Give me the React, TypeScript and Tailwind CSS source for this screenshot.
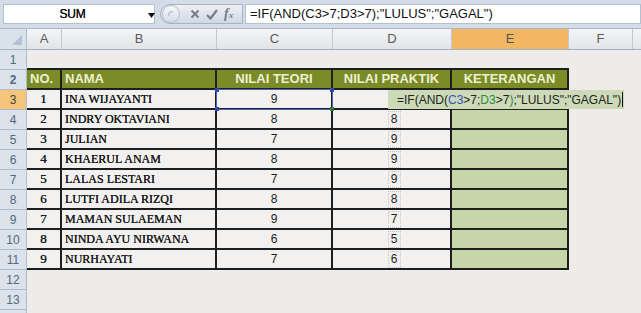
import React from "react";

const data: [string, string, string, string][] = [
  ["1", "INA WIJAYANTI", "9", ""],
  ["2", "INDRY OKTAVIANI", "8", "8"],
  ["3", "JULIAN", "7", "9"],
  ["4", "KHAERUL ANAM", "8", "9"],
  ["5", "LALAS LESTARI", "7", "9"],
  ["6", "LUTFI ADILA RIZQI", "8", "8"],
  ["7", "MAMAN SULAEMAN", "9", "7"],
  ["8", "NINDA AYU NIRWANA", "6", "5"],
  ["9", "NURHAYATI", "7", "6"],
];

function RowHeader({ n, active }: { n?: number; active?: boolean }) {
  return (
    <div
      className={`w-[27px] shrink-0 h-full flex items-center justify-center border-r border-b border-[#aebdce] text-[12px] ${
        active ? "bg-[#f5c57c] text-[#3f3f3f]" : "bg-[#dbe2eb] text-[#56667c]"
      }`}
    >
      {n}
    </div>
  );
}

const tb = "border-r-2 border-b-2 border-[#1e1e1e]";

export default function App() {
  return (
    <div className="w-[641px] h-[313px] overflow-hidden bg-[#edeceb] font-['Liberation_Sans',sans-serif] select-none">
      {/* Formula bar */}
      <div className="h-[29px] bg-[#d3dce7] border-b border-[#a9b8c9] pt-[4px] pb-[4px] flex">
        <div className="ml-[3px] w-[152px] h-[20px] bg-white border border-[#b3c0cf] flex items-center relative">
          <div className="w-[137px] text-center text-[12px] text-[#111] tracking-tight [text-shadow:0_0_0.4px_#000]">SUM</div>
          <svg width="9" height="8" viewBox="0 0 9 8" className="absolute left-[143px] top-[6px]">
            <path d="M1 2 L8 2 L4.5 7 Z" fill="#111" />
          </svg>
        </div>
        <div className="ml-[5px] w-[83px] h-[20px] rounded-l-full bg-gradient-to-b from-[#eef1f5] to-[#cfd8e3] border border-[#a6b3c3] flex items-center relative">
          <div className="ml-[1px] w-[18px] h-[18px] rounded-full bg-gradient-to-b from-[#f7f9fb] to-[#d3dce6] border border-[#b5c1cf] flex items-center justify-center">
            <svg width="8" height="8" viewBox="0 0 8 8">
              <path d="M2 6 A3 3 0 0 1 6 2" stroke="#b8c2ce" strokeWidth="1.5" fill="none" />
            </svg>
          </div>
          <svg width="10" height="10" viewBox="0 0 10 10" className="ml-[10px]">
            <path d="M1.5 1.5 L8.5 8.5 M8.5 1.5 L1.5 8.5" stroke="#767d88" strokeWidth="2" />
          </svg>
          <svg width="12" height="11" viewBox="0 0 12 11" className="ml-[6px]">
            <path d="M1 6 L4.5 9.5 L11 1" stroke="#767d88" strokeWidth="2.2" fill="none" />
          </svg>
          <span className="ml-[6px] italic font-['Liberation_Serif',serif] text-[14px] text-[#767d88] font-bold leading-none">
            f<span className="text-[9px]">x</span>
          </span>
        </div>
        <div className="ml-[2px] flex-1 h-[20px] bg-white border border-[#b3c0cf] flex items-center pl-[4px] text-[13px] text-[#111] whitespace-nowrap">
          =IF(AND(C3&gt;7;D3&gt;7);"LULUS";"GAGAL")
        </div>
      </div>

      {/* Column headers */}
      <div className="h-[21px] flex bg-gradient-to-b from-[#f4f5f6] to-[#e2e4e7] border-b border-[#a4b3c4] text-[13px] text-[#5a5a5a]">
        <div className="w-[27px] shrink-0 h-full bg-[#d9e1ea] border-r border-[#aebdce] relative">
          <svg width="12" height="12" viewBox="0 0 12 12" className="absolute right-[3px] bottom-[3px]">
            <path d="M11 1 L11 11 L1 11 Z" fill="#b3c1d2" />
          </svg>
        </div>
        <div className="w-[35px] shrink-0 h-full flex items-center justify-center border-r border-[#c3c8cf]">A</div>
        <div className="w-[155px] shrink-0 h-full flex items-center justify-center border-r border-[#c3c8cf]">B</div>
        <div className="w-[116px] shrink-0 h-full flex items-center justify-center border-r border-[#c3c8cf]">C</div>
        <div className="w-[119px] shrink-0 h-full flex items-center justify-center border-r border-[#c3c8cf]">D</div>
        <div className="w-[117px] shrink-0 h-full flex items-center justify-center border-r border-[#c3c8cf] bg-[#f2b763] text-[#555]">E</div>
        <div className="w-[64px] shrink-0 h-full flex items-center justify-center border-r border-[#c3c8cf]">F</div>
        <div className="flex-1 h-full" />
      </div>

      {/* Row 1 */}
      <div className="h-[20px] flex">
        <RowHeader n={1} />
        <div className="w-[542px] shrink-0 border-b-2 border-[#1e1e1e]" />
        <div className="flex-1" />
      </div>

      {/* Row 2 header */}
      <div className="h-[20px] flex text-[13px] font-bold text-[#eef0d2]">
        <RowHeader n={2} />
        <div className={`w-[35px] shrink-0 bg-[#7b8b27] ${tb} flex items-center pl-[3px]`}>NO.</div>
        <div className={`w-[155px] shrink-0 bg-[#7b8b27] ${tb} flex items-center pl-[3px]`}>NAMA</div>
        <div className={`w-[116px] shrink-0 bg-[#7b8b27] ${tb} flex items-center justify-center`}>NILAI TEORI</div>
        <div className={`w-[119px] shrink-0 bg-[#7b8b27] ${tb} flex items-center justify-center`}>NILAI PRAKTIK</div>
        <div className={`w-[117px] shrink-0 bg-[#7b8b27] ${tb} flex items-center justify-center`}>KETERANGAN</div>
        <div className="flex-1" />
      </div>

      {/* Data rows */}
      {data.map((r, i) => {
        const rowNo = i + 3;
        const first = i === 0;
        return (
          <div key={rowNo} className="h-[20px] flex relative text-[12px] text-[#1e1e1e]">
            <RowHeader n={rowNo} active={first} />
            <div className={`w-[35px] shrink-0 bg-[#f2f1f0] ${tb} flex items-center justify-center font-['Liberation_Serif',serif] text-[13px] [text-shadow:0_0_0.5px_#000]`}>
              {r[0]}
            </div>
            <div className={`w-[155px] shrink-0 bg-[#f2f1f0] ${tb} flex items-center pl-[3px] font-['Liberation_Serif',serif] text-[12px] whitespace-nowrap [text-shadow:0_0_0.5px_#000]`}>
              {r[1]}
            </div>
            <div className={`w-[116px] shrink-0 bg-[#f2f1f0] ${tb} flex items-center justify-center relative`}>
              {r[2]}
              {first && (
                <div className="absolute -top-[1px] -left-[1px] -right-[2px] -bottom-[2px] border border-[#4a63c2] z-10">
                  <div className="absolute -left-[2px] -top-[2px] w-[4px] h-[4px] bg-[#2f48b0]" />
                  <div className="absolute -left-[2px] -bottom-[2px] w-[4px] h-[4px] bg-[#2f48b0]" />
                  <div className="absolute -right-[2px] -top-[2px] w-[4px] h-[4px] bg-[#2f48b0]" />
                  <div className="absolute -right-[2px] -bottom-[2px] w-[4px] h-[4px] bg-[#2e7d3c]" />
                </div>
              )}
            </div>
            <div className={`w-[119px] shrink-0 bg-[#f2f1f0] ${tb} flex items-center justify-center pl-[5px]`}>
              {r[3] && (
                <span className="inline-flex items-center justify-center w-[13px] h-[17px] border border-dotted border-[#c4c4c4]">
                  {r[3]}
                </span>
              )}
            </div>
            <div className={`w-[117px] shrink-0 bg-[#c6d6a8] ${tb}`} />
            <div className="flex-1" />
            {first && (
              <div className="absolute left-[388px] top-0 w-[236px] h-[19px] bg-[#cddab7] z-20 flex items-center pl-[9px] text-[12px] text-[#222] whitespace-nowrap">
                <span>=IF(AND(</span>
                <span className="text-[#3653c4]">C3</span>
                <span>&gt;7;</span>
                <span className="text-[#2f8a3a]">D3</span>
                <span>&gt;7</span>
                <span className="text-[#2f8a3a]">)</span>
                <span>;"LULUS";"GAGAL")</span>
                <span className="ml-[1px] w-[1px] h-[15px] bg-[#111]" />
              </div>
            )}
          </div>
        );
      })}

      {/* Empty rows */}
      {[12, 13].map((n) => (
        <div key={n} className="h-[20px] flex">
          <RowHeader n={n} />
          <div className="flex-1" />
        </div>
      ))}
      <div className="h-[20px] flex">
        <RowHeader />
        <div className="flex-1" />
      </div>
    </div>
  );
}
